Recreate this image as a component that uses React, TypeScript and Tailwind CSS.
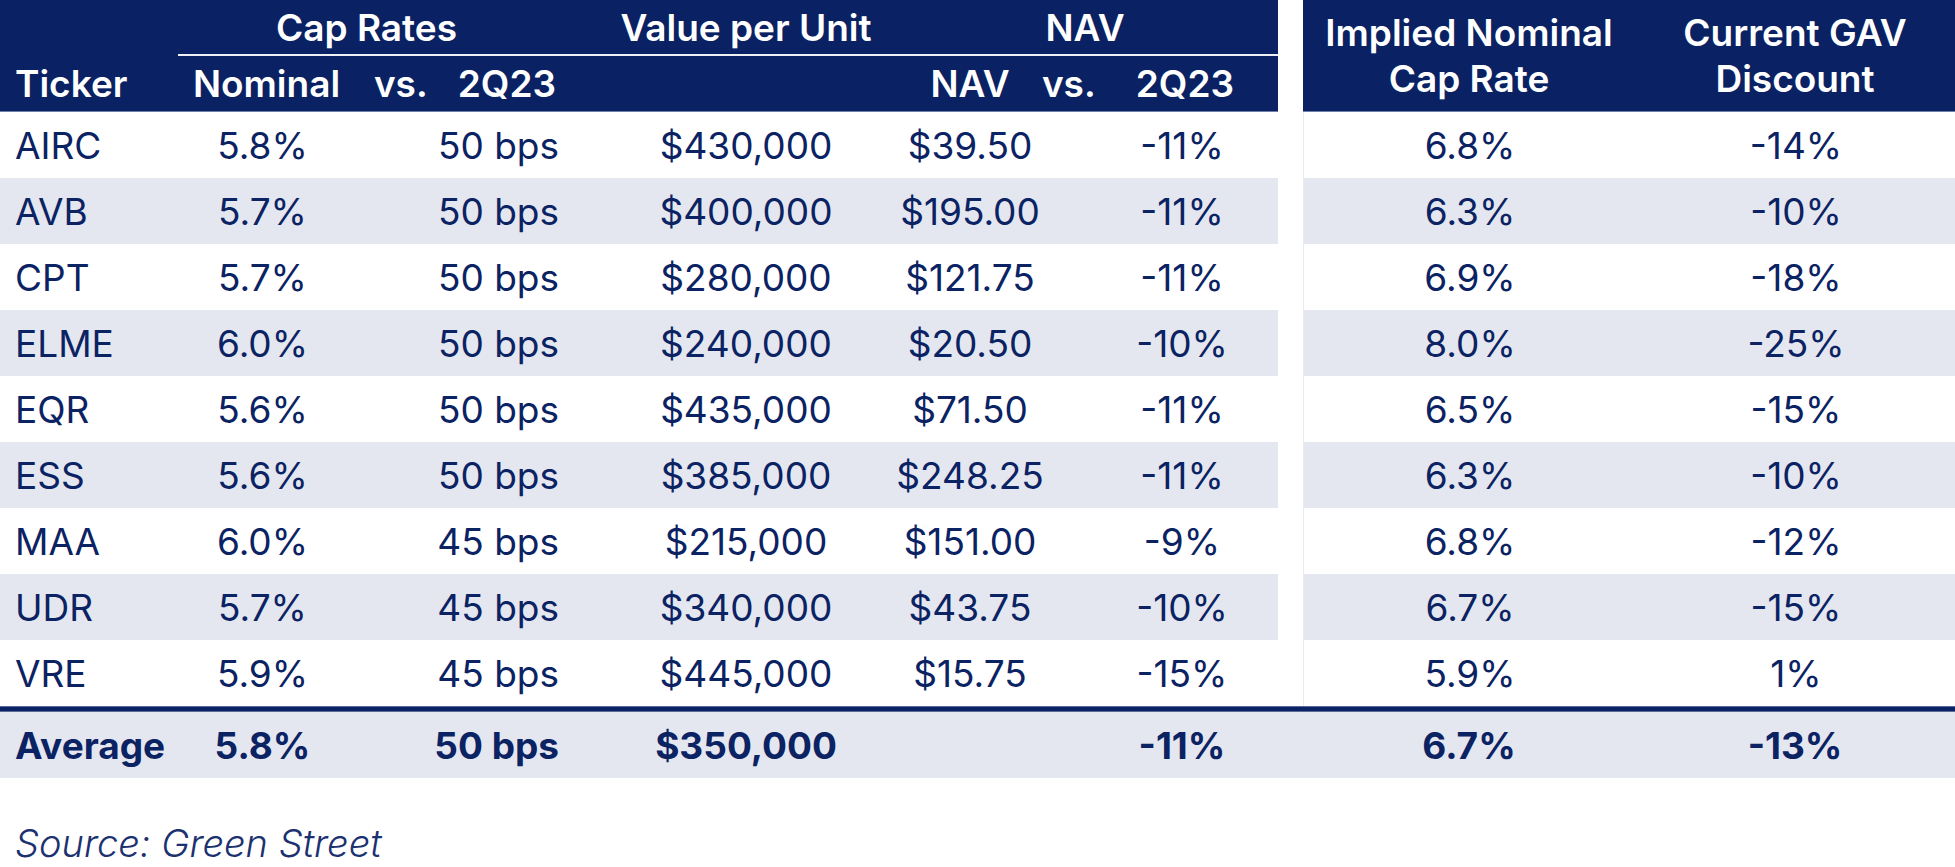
type Row = {
  ticker: string;
  nominal: string;
  bps: string;
  value: string;
  nav: string;
  navChg: string;
  implied: string;
  discount: string;
};

const rows: Row[] = [
  { ticker: "AIRC", nominal: "5.8%", bps: "50 bps", value: "$430,000", nav: "$39.50", navChg: "-11%", implied: "6.8%", discount: "-14%" },
  { ticker: "AVB", nominal: "5.7%", bps: "50 bps", value: "$400,000", nav: "$195.00", navChg: "-11%", implied: "6.3%", discount: "-10%" },
  { ticker: "CPT", nominal: "5.7%", bps: "50 bps", value: "$280,000", nav: "$121.75", navChg: "-11%", implied: "6.9%", discount: "-18%" },
  { ticker: "ELME", nominal: "6.0%", bps: "50 bps", value: "$240,000", nav: "$20.50", navChg: "-10%", implied: "8.0%", discount: "-25%" },
  { ticker: "EQR", nominal: "5.6%", bps: "50 bps", value: "$435,000", nav: "$71.50", navChg: "-11%", implied: "6.5%", discount: "-15%" },
  { ticker: "ESS", nominal: "5.6%", bps: "50 bps", value: "$385,000", nav: "$248.25", navChg: "-11%", implied: "6.3%", discount: "-10%" },
  { ticker: "MAA", nominal: "6.0%", bps: "45 bps", value: "$215,000", nav: "$151.00", navChg: "-9%", implied: "6.8%", discount: "-12%" },
  { ticker: "UDR", nominal: "5.7%", bps: "45 bps", value: "$340,000", nav: "$43.75", navChg: "-10%", implied: "6.7%", discount: "-15%" },
  { ticker: "VRE", nominal: "5.9%", bps: "45 bps", value: "$445,000", nav: "$15.75", navChg: "-15%", implied: "5.9%", discount: "1%" },
];

const average: Row = {
  ticker: "Average",
  nominal: "5.8%",
  bps: "50 bps",
  value: "$350,000",
  nav: "",
  navChg: "-11%",
  implied: "6.7%",
  discount: "-13%",
};

// left block: 180 / 165 / 255 / 292 / 156 / 230 = 1278px
const LEFT = "grid grid-cols-[180px_165px_255px_292px_156px_230px]";
// right block: 332 / 320 = 652px
const RIGHT = "grid grid-cols-[332px_320px]";

function LeftCells({ r }: { r: Row }) {
  return (
    <>
      <div className="pl-[15px]">{r.ticker}</div>
      <div className="text-center">{r.nominal}</div>
      <div className="text-right pr-[41px]">{r.bps}</div>
      <div className="text-center">{r.value}</div>
      <div className="text-center">{r.nav}</div>
      <div className="text-center pl-[38px]">{r.navChg}</div>
    </>
  );
}

function RightCells({ r }: { r: Row }) {
  return (
    <>
      <div className="text-center">{r.implied}</div>
      <div className="text-center">{r.discount}</div>
    </>
  );
}

export default function App() {
  return (
    <div className="w-[1955px] bg-white font-['Inter',sans-serif] text-[#0b2263]">
      {/* HEADER */}
      <div className="flex text-white font-semibold text-[37px] leading-none">
        <div className="w-[1278px] h-[112px] bg-[#0a2263] border-b border-[#6f7fa8] flex flex-col">
          <div className={`${LEFT} h-[54px] items-center`}>
            <div />
            <div className="col-span-2 text-center pr-[47px]">Cap Rates</div>
            <div className="text-center">Value per Unit</div>
            <div className="col-span-2 text-center">NAV</div>
          </div>
          <div className="ml-[178px] h-[2px] bg-[#eef0f5]" />
          <div className={`${LEFT} flex-1 items-center`}>
            <div className="pl-[15px]">Ticker</div>
            <div className="text-center pl-[8px]">Nominal</div>
            <div className="flex justify-end gap-[30px] pr-[44px]">
              <span>vs.</span>
              <span>2Q23</span>
            </div>
            <div />
            <div className="text-center">NAV</div>
            <div className="flex justify-end gap-[40px] pr-[44px]">
              <span>vs.</span>
              <span>2Q23</span>
            </div>
          </div>
        </div>
        <div className="w-[25px]" />
        <div className={`${RIGHT} w-[652px] h-[112px] bg-[#0a2263] border-b border-[#6f7fa8] items-center leading-[46px]`}>
          <div className="text-center">
            Implied Nominal
            <br />
            Cap Rate
          </div>
          <div className="text-center">
            Current GAV
            <br />
            Discount
          </div>
        </div>
      </div>

      {/* BODY */}
      {rows.map((r, i) => (
        <div key={r.ticker} className="flex text-[37px] leading-none">
          <div
            className={`${LEFT} w-[1278px] h-[66px] items-center ${
              i % 2 === 1 ? "bg-[#e4e7f0]" : "bg-white"
            }`}
          >
            <LeftCells r={r} />
          </div>
          <div className="w-[25px]" />
          <div
            className={`${RIGHT} w-[652px] h-[66px] items-center border-l border-[#e9ebf0] ${
              i % 2 === 1 ? "bg-[#e4e7f0]" : "bg-white"
            }`}
          >
            <RightCells r={r} />
          </div>
        </div>
      ))}

      {/* AVERAGE */}
      <div className="h-[4px] bg-[#0a2263] border-y border-[#5a6b99] box-content" />
      <div className="flex h-[66px] items-center bg-[#e4e7f0] text-[37px] leading-none font-bold">
        <div className={`${LEFT} w-[1278px]`}>
          <LeftCells r={average} />
        </div>
        <div className="w-[25px]" />
        <div className={`${RIGHT} w-[652px]`}>
          <RightCells r={average} />
        </div>
      </div>

      <p className="mt-[45px] pl-[15px] text-[38px] leading-[40px] italic font-light text-[#1b3170]">
        Source: Green Street
      </p>
    </div>
  );
}
